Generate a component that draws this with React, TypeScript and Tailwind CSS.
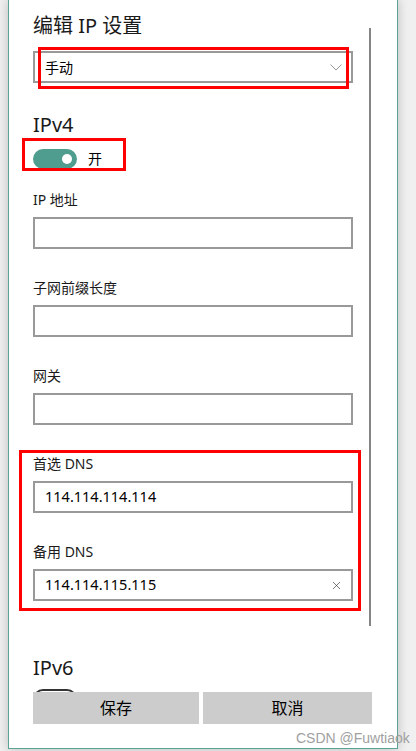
import { X } from 'lucide-react'

// 编辑 IP 设置 — Windows 设置对话框，带标注红框

const FONT = '[font-family:"Noto_Sans","Noto_Sans_CJK_SC",sans-serif]'

function Field({ label, value, clear, first }: {
  label: string
  value?: string
  clear?: boolean
  first?: boolean
}) {
  return (
    <div className={first ? 'mt-[21px]' : 'mt-[29px]'}>
      <div className="text-[14px] leading-[20px] text-[#1a1a1a]">{label}</div>
      <div className="mt-[7px] h-[32px] w-[320px] border-2 border-[#999999] bg-white flex items-center pl-[10px] pr-[8px]">
        <span className="flex-1 text-[14.5px] text-black">{value}</span>
        {clear && <X size={13} strokeWidth={1.2} className="text-[#333]" />}
      </div>
    </div>
  )
}

export default function App() {
  return (
    <div className={`relative w-[416px] h-[751px] overflow-hidden bg-[#f0f0f0] ${FONT}`}>
      <div className="ml-[8px] w-[390px] h-[749px] border-x border-b border-[#5aa396] bg-white shadow-[0_0_10px_rgba(0,0,0,0.22)] flex flex-col">
        <div className="relative h-[692px] overflow-hidden pl-[24px]">
          <h1 className="mt-[12px] text-[20px] leading-[28px] text-[#1a1a1a] font-normal">编辑 IP 设置</h1>

          <div className="mt-[11px] h-[32px] w-[320px] border-2 border-[#999999] flex items-center pl-[10px] pr-[8px]">
            <span className="flex-1 text-[14px] text-black">手动</span>
            <svg width="12" height="7" viewBox="0 0 12 7" className="mr-[1px]">
              <polyline points="0.5,0.5 6,6 11.5,0.5" fill="none" stroke="#999" strokeWidth="1" />
            </svg>
          </div>

          <div className="mt-[28px] text-[20px] leading-[28px] text-[#1a1a1a]">IPv4</div>
          <div className="mt-[9px] flex items-center gap-[11px]">
            <div className="w-[44px] h-[20px] rounded-full bg-[#4f9d8f] flex items-center justify-end pr-[5px]">
              <div className="w-[10px] h-[10px] rounded-full bg-white" />
            </div>
            <span className="text-[14px] text-black">开</span>
          </div>

          <Field label="IP 地址" first />
          <Field label="子网前缀长度" />
          <Field label="网关" />
          <Field label="首选 DNS" value="114.114.114.114" />
          <Field label="备用 DNS" value="114.114.115.115" clear />

          <div className="mt-[53px] text-[20px] leading-[28px] text-[#1a1a1a]">IPv6</div>
          <div className="mt-[7px] w-[44px] h-[20px] rounded-full border-2 border-[#333]" />

          {/* scrollbar */}
          <div className="absolute left-[360px] top-[28px] w-[2px] h-[598px] bg-[#858585]" />
        </div>

        <div className="flex gap-[4px] pl-[24px]">
          <button type="button" className="w-[166px] h-[32px] bg-[#cccccc] text-[16px] text-black">保存</button>
          <button type="button" className="w-[169px] h-[32px] bg-[#cccccc] text-[16px] text-black">取消</button>
        </div>
      </div>

      {/* annotation boxes */}
      <div className="absolute left-[38px] top-[47px] w-[311px] h-[42px] border-[3px] border-[#ff0000]" />
      <div className="absolute left-[22px] top-[138px] w-[104px] h-[33px] border-[3px] border-[#ff0000]" />
      <div className="absolute left-[19px] top-[450px] w-[342px] h-[161px] border-[3px] border-[#ff0000]" />

      <div className="absolute left-[296px] top-[729px] text-[14px] leading-[18px] text-[#a0a0a0] [font-family:'Liberation_Sans',sans-serif]">
        CSDN @Fuwtiaok
      </div>
    </div>
  )
}
